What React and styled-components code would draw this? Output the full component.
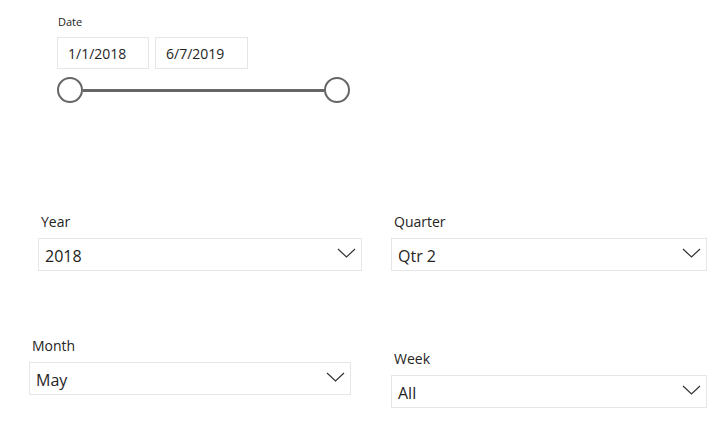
import styled, { createGlobalStyle } from "styled-components";

const GlobalStyle = createGlobalStyle`
  html, body {
    margin: 0;
    padding: 0;
    background: #ffffff;
  }
  body {
    font-family: "Open Sans", "Noto Sans", "Liberation Sans", sans-serif;
    color: #252423;
  }
`;

const Page = styled.div`
  display: flex;
  flex-direction: column;
  width: 718px;
  height: 429px;
  overflow: hidden;
`;

// Date range slicer
const DateSlicer = styled.div`
  display: flex;
  flex-direction: column;
  margin-left: 57px;
  padding-top: 14px;
  width: 293px;
`;

const SmallLabel = styled.div`
  font-size: 11px;
  line-height: 15px;
  margin-left: 1px;
`;

const DateInputs = styled.div`
  display: flex;
  gap: 6px;
  margin-top: 8px;
`;

const DateInput = styled.div`
  box-sizing: border-box;
  display: flex;
  align-items: center;
  width: ${(p) => p.$width}px;
  height: 32px;
  padding-left: 10px;
  border: 1px solid #e6e6e6;
  font-size: 14px;
  color: #252423;
`;

const Slider = styled.div`
  display: flex;
  align-items: center;
  margin-top: 8px;
  height: 26px;
`;

const Thumb = styled.div`
  box-sizing: border-box;
  flex: none;
  width: 26px;
  height: 26px;
  border-radius: 50%;
  border: 2px solid #666666;
  background: #ffffff;
`;

const Track = styled.div`
  flex: 1;
  height: 3px;
  background: #666666;
`;

// Dropdown slicers
const Row = styled.div`
  display: flex;
  align-items: flex-start;
  margin-top: ${(p) => p.$top}px;
`;

const Slicer = styled.div`
  display: flex;
  flex-direction: column;
  flex: none;
  width: ${(p) => p.$width}px;
  margin-left: ${(p) => p.$left}px;
  margin-top: ${(p) => p.$top || 0}px;
`;

const Label = styled.div`
  font-size: 14px;
  line-height: 19px;
  padding-left: 3px;
`;

const Dropdown = styled.div`
  box-sizing: border-box;
  display: flex;
  align-items: center;
  justify-content: space-between;
  height: 33px;
  margin-top: 7px;
  padding: 0 5px 0 6px;
  border: 1px solid #e6e6e6;
  font-size: 16px;
  color: #252423;
`;

const Value = styled.span`
  padding-top: 3px;
`;

const Chevron = () => (
  <svg width="19" height="12" viewBox="0 0 19 12" style={{ marginTop: -3 }}>
    <path d="M1 2 L9.5 10 L18 2" fill="none" stroke="#333333" strokeWidth="1.2" />
  </svg>
);

const DropdownSlicer = ({ label, value, width, left, top }) => (
  <Slicer $width={width} $left={left} $top={top}>
    <Label>{label}</Label>
    <Dropdown>
      <Value>{value}</Value>
      <Chevron />
    </Dropdown>
  </Slicer>
);

const App = () => {
  return (
    <Page>
      <GlobalStyle />
      <DateSlicer>
        <SmallLabel>Date</SmallLabel>
        <DateInputs>
          <DateInput $width={92}>1/1/2018</DateInput>
          <DateInput $width={93}>6/7/2019</DateInput>
        </DateInputs>
        <Slider>
          <Thumb />
          <Track />
          <Thumb />
        </Slider>
      </DateSlicer>
      <Row $top={109}>
        <DropdownSlicer label="Year" value="2018" width={324} left={38} />
        <DropdownSlicer label="Quarter" value="Qtr 2" width={316} left={29} />
      </Row>
      <Row $top={65}>
        <DropdownSlicer label="Month" value="May" width={322} left={29} />
        <DropdownSlicer label="Week" value="All" width={316} left={40} top={13} />
      </Row>
    </Page>
  );
};

export default App;
